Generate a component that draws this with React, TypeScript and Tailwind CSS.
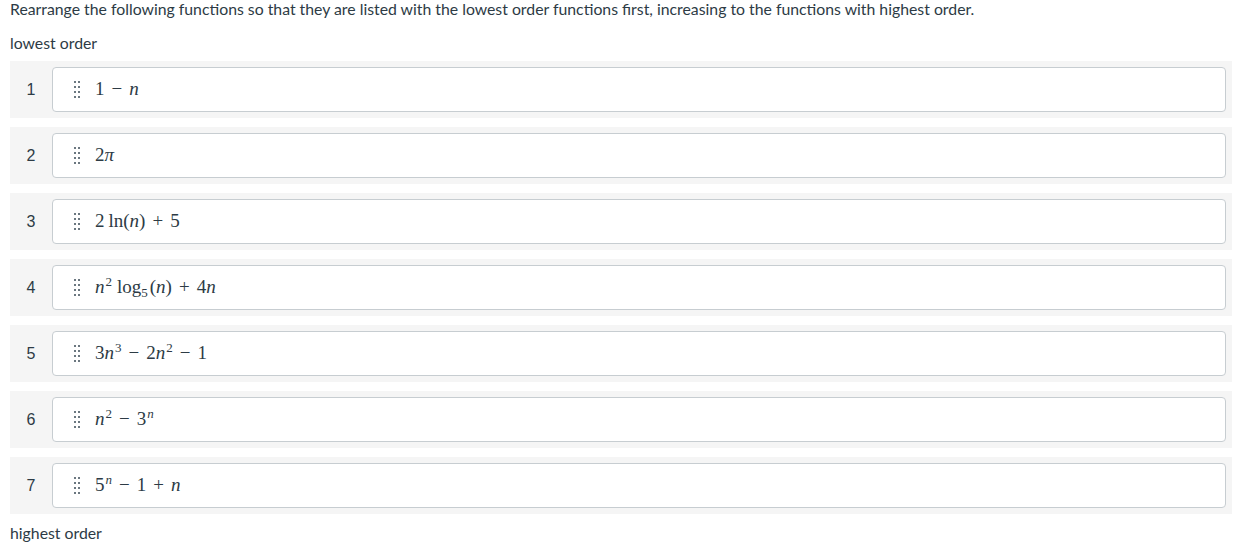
import React from 'react';

const mathFont = { fontFamily: '"Liberation Serif", "DejaVu Serif", serif' };

function V({ children }: { children: React.ReactNode }) {
  return <i className="font-normal">{children}</i>;
}

function Sup({ children }: { children: React.ReactNode }) {
  return <span className="text-[13px] relative top-[-7px] ml-[1px]">{children}</span>;
}

function Op({ children }: { children: React.ReactNode }) {
  return <span className="mx-[7px]">{children}</span>;
}

function Handle() {
  const dots = [];
  for (let r = 0; r < 4; r++) {
    for (let c = 0; c < 2; c++) {
      dots.push(<rect key={`${r}-${c}`} x={c * 4} y={r * 5} width="2" height="2" fill="#6b7780" />);
    }
  }
  return (
    <svg width="6" height="17" viewBox="0 0 6 17" className="shrink-0">
      {dots}
    </svg>
  );
}

const items: React.ReactNode[] = [
  <>1<Op>−</Op><V>n</V></>,
  <>2<V>π</V></>,
  <>2<span className="ml-[4px]">ln</span>(<V>n</V>)<Op>+</Op>5</>,
  <><V>n</V><Sup>2</Sup><span className="ml-[5px]">log</span><span className="text-[13px] relative top-[4px] mr-[2px]">5</span>(<V>n</V>)<Op>+</Op>4<V>n</V></>,
  <>3<V>n</V><Sup>3</Sup><Op>−</Op>2<V>n</V><Sup>2</Sup><Op>−</Op>1</>,
  <><V>n</V><Sup>2</Sup><Op>−</Op>3<Sup><V>n</V></Sup></>,
  <>5<Sup><V>n</V></Sup><Op>−</Op>1<Op>+</Op><V>n</V></>,
];

export default function App() {
  return (
    <div className="min-h-screen bg-white text-[#2d3b45]" style={{ fontFamily: 'Lato, "Noto Sans", sans-serif' }}>
      <div className="pl-[10px] pr-[7px]">
        <p className="text-[15.8px] leading-[18px]">
          Rearrange the following functions so that they are listed with the lowest order functions first, increasing to the functions with highest order.
        </p>
        <p className="text-[15.8px] leading-[18px] mt-[16px]">lowest order</p>
        <ul className="mt-[9px] flex flex-col gap-[9px]">
          {items.map((it, i) => (
            <li key={i} className="bg-[#f5f5f5] h-[57px] flex items-center pr-[6px]">
              <div className="w-[42px] shrink-0 flex justify-center text-[16px] pt-[1px]" style={{ fontFamily: '"Liberation Sans", Arial, sans-serif' }}>
                {i + 1}
              </div>
              <div className="flex-1 h-[45px] bg-white border border-[#c7cdd1] rounded-[4px] flex items-center pl-[21px]">
                <Handle />
                <span className="ml-[15px] text-[19px] whitespace-nowrap" style={mathFont}>
                  {it}
                </span>
              </div>
            </li>
          ))}
        </ul>
        <p className="text-[15.8px] leading-[18px] mt-[10px]">highest order</p>
      </div>
    </div>
  );
}
